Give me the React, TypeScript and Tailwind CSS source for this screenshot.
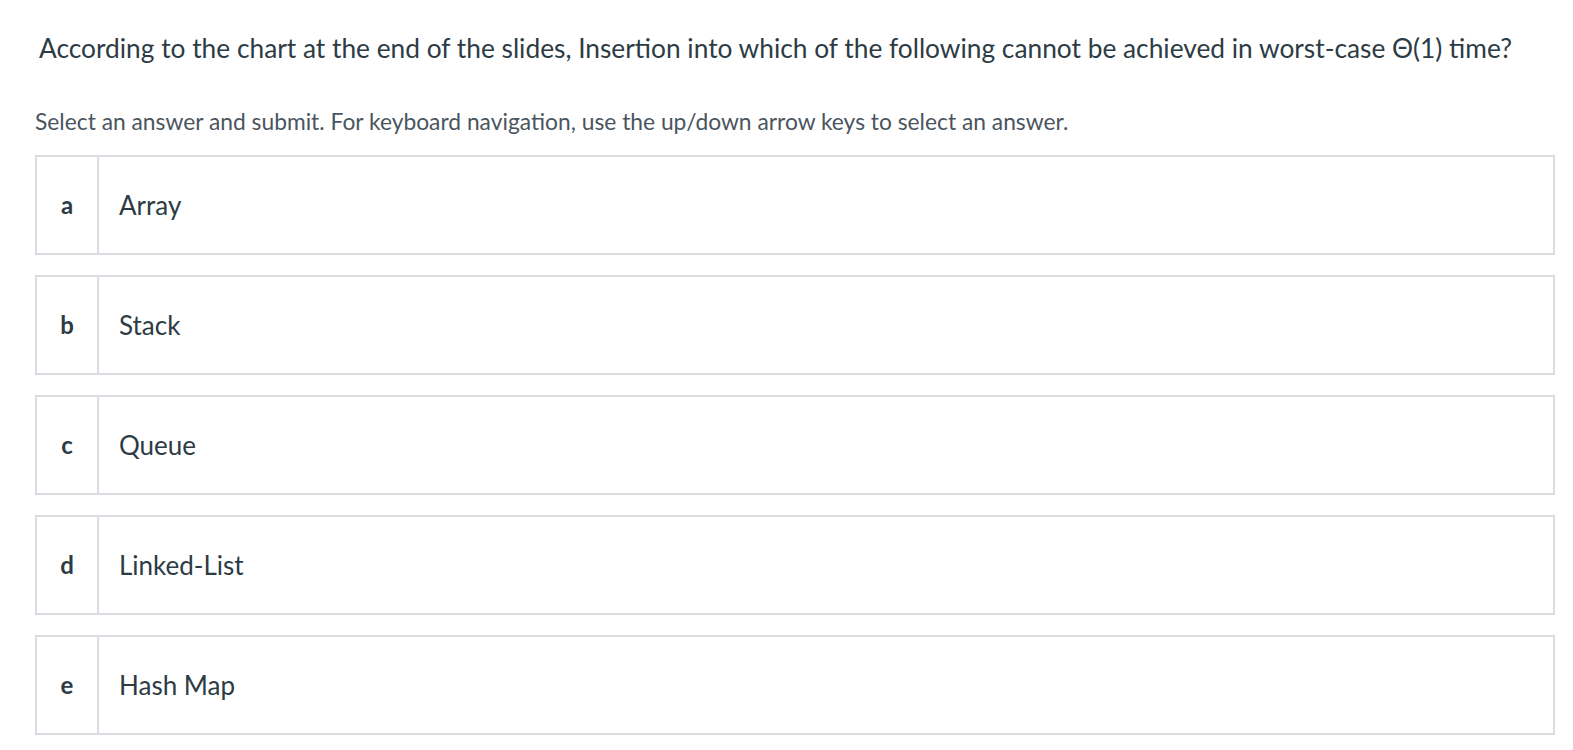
const options = [
  { key: "a", label: "Array" },
  { key: "b", label: "Stack" },
  { key: "c", label: "Queue" },
  { key: "d", label: "Linked-List" },
  { key: "e", label: "Hash Map" },
];

export default function App() {
  return (
    <div
      className="min-h-screen bg-white pl-[35px] pr-[18px] text-[#2d3b45]"
      style={{ fontFamily: "Lato, 'Open Sans', sans-serif" }}
    >
      <h1 className="pl-[4px] pt-[30px] text-[26.3px] leading-[36px] font-normal whitespace-nowrap">
        According to the chart at the end of the slides, Insertion into which of the following cannot be achieved in worst-case Θ(1) time?
      </h1>
      <p className="mt-[40px] text-[22.8px] leading-[30px] text-[#4a5560] whitespace-nowrap">
        Select an answer and submit. For keyboard navigation, use the up/down arrow keys to select an answer.
      </p>
      <div className="mt-[19px] flex flex-col gap-[20px]">
        {options.map((o) => (
          <div key={o.key} className="flex h-[100px] border-2 border-[#d9dde1]">
            <div className="flex w-[62px] items-center justify-center border-r-2 border-[#d9dde1] text-[24px] font-bold">
              {o.key}
            </div>
            <div className="flex items-center pl-[20px] text-[26px]">{o.label}</div>
          </div>
        ))}
      </div>
    </div>
  );
}
